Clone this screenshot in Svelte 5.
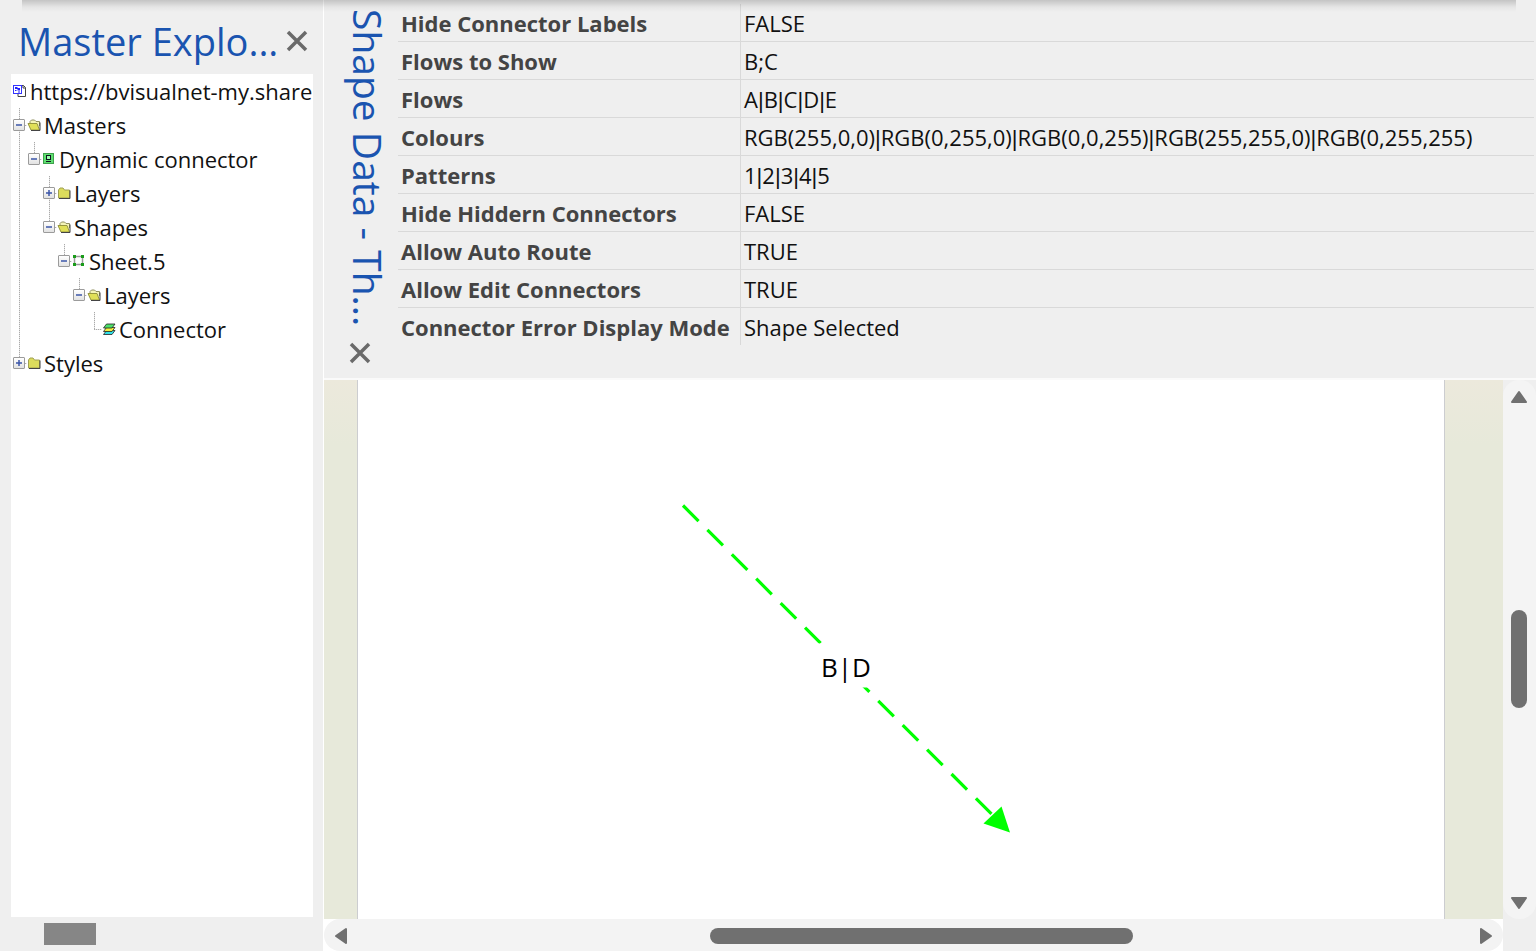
<script lang="ts">
  type Row = {
    label: string;
    icon: "open" | "closed" | "master" | "shape" | "layer";
    box?: "+" | "-";
    guides: string[];
  };

  // guides: one cell per level, the last one belongs to the row itself
  const rows: Row[] = [
    { label: "Masters", icon: "open", box: "-", guides: ["full"] },
    { label: "Dynamic connector", icon: "master", box: "-", guides: ["full", "half"] },
    { label: "Layers", icon: "closed", box: "+", guides: ["full", "", "full"] },
    { label: "Shapes", icon: "open", box: "-", guides: ["full", "", "half"] },
    { label: "Sheet.5", icon: "shape", box: "-", guides: ["full", "", "", "half"] },
    { label: "Layers", icon: "open", box: "-", guides: ["full", "", "", "", "half"] },
    { label: "Connector", icon: "layer", guides: ["full", "", "", "", "", "half"] },
    { label: "Styles", icon: "closed", box: "+", guides: ["half"] },
  ];

  const shapeData = [
    ["Hide Connector Labels", "FALSE"],
    ["Flows to Show", "B;C"],
    ["Flows", "A|B|C|D|E"],
    ["Colours", "RGB(255,0,0)|RGB(0,255,0)|RGB(0,0,255)|RGB(255,255,0)|RGB(0,255,255)"],
    ["Patterns", "1|2|3|4|5"],
    ["Hide Hiddern Connectors", "FALSE"],
    ["Allow Auto Route", "TRUE"],
    ["Allow Edit Connectors", "TRUE"],
    ["Connector Error Display Mode", "Shape Selected"],
  ];
</script>

<div class="app">
  <div class="top-shadow"></div>

  <aside class="explorer">
    <header class="explorer-head">
      <h1>Master Explo...</h1>
      <button class="close" aria-label="Close Master Explorer">
        <svg width="22" height="22" viewBox="0 0 22 22"><path d="M2 2L20 20M20 2L2 20" /></svg>
      </button>
    </header>
    <div class="tree">
      <div class="row root">
        <svg class="doc" width="14" height="14" viewBox="0 0 14 14">
          <path d="M5 1.500h5.500l2 2V12.500H5z" fill="#fff" stroke="#444" />
          <path d="M10 1.500v2.500h2.500" fill="none" stroke="#444" />
          <rect x=".5" y="1.500" width="8" height="8" fill="#fff" stroke="#33f" />
          <path d="M2 3h2.500v2H2zM4.500 4h2.500v2.500H4.500zM2 6h1.500v1H2zM5 7.500h2v1H5z" fill="#22f" />
        </svg>
        <span>https://bvisualnet-my.share</span>
      </div>
      {#each rows as row}
        <div class="row">
          {#each row.guides as guide, i}
            <span class="cell {guide}" class:own={i === row.guides.length - 1}>
              {#if row.box && i === row.guides.length - 1}
                <button class="box" aria-label="Toggle {row.label}">
                  <svg width="8" height="8" viewBox="0 0 8 8">
                    <path d={row.box === "+" ? "M1 4h6M4 1v6" : "M1 4h6"} stroke="#3b56a8" stroke-width="1.5" />
                  </svg>
                </button>
              {/if}
            </span>
          {/each}
          <svg class="icon" width="14" height="14" viewBox="0 0 14 14">
            {#if row.icon === "closed"}
              <path d="M1.500 4L3 2h3l1.500 2h5v8h-11z" fill="#dcdc5c" stroke="#a0a052" />
              <path d="M2 12.500h11V4.500" fill="none" stroke="#444" />
            {:else if row.icon === "open"}
              <path d="M3 8V3.500L4.500 2h3L9 3.500h3.500V8" fill="#f4f4b8" stroke="#909060" />
              <path d="M1 5.500h9l2.500 6.500H4z" fill="#e0e058" stroke="#96963f" />
              <path d="M4 12.500h9V4.500" fill="none" stroke="#444" />
            {:else if row.icon === "master"}
              <rect x="1.500" y="1.500" width="10" height="10" fill="#5ee070" stroke="#3fa04c" />
              <rect x="4.500" y="3.500" width="4" height="4" fill="#9fa" stroke="#112" />
              <path d="M4 9.500h5" stroke="#112" />
            {:else if row.icon === "shape"}
              <rect x="2.500" y="2.500" width="8" height="8" fill="#fff" stroke="#999" stroke-width="1.5" />
              <path d="M1 1h3v3H1zM9 1h3v3H9zM1 9h3v3H1zM9 9h3v3H9z" fill="#1a9c1a" />
            {:else}
              <path d="M4.500 8.500h8.500l-3 4H1.500z" fill="#2fe0e8" stroke="#222" stroke-width=".8" />
              <path d="M4.500 5.500h8.500l-3 4H1.500z" fill="#f2ee3c" stroke="#222" stroke-width=".8" />
              <path d="M4.500 2h8.500l-3 4H1.500z" fill="#4ee06a" stroke="#222" stroke-width=".8" />
            {/if}
          </svg>
          <span class="label">{row.label}</span>
        </div>
      {/each}
    </div>
    <div class="tree-scroll"><div class="tree-thumb"></div></div>
  </aside>

  <main>
    <section class="shape-data">
      <header class="data-head">
        <h2>Shape Data - Th...</h2>
        <button class="close" aria-label="Close Shape Data">
          <svg width="22" height="22" viewBox="0 0 22 22"><path d="M2 2L20 20M20 2L2 20" /></svg>
        </button>
      </header>
      <table>
        <tbody>
          {#each shapeData as [name, value]}
            <tr>
              <th scope="row">{name}</th>
              <td>{#each value.split("|") as part, i}{#if i > 0}<span class="sep">|</span>{/if}{part}{/each}</td>
            </tr>
          {/each}
        </tbody>
      </table>
    </section>

    <section class="drawing">
      <div class="page">
        <svg viewBox="0 0 1086 538">
          <path d="M325 125L636 436" stroke="#0f0" stroke-width="3.2" stroke-dasharray="22 12.520" />
          <path d="M652 452L625.500 443L643.500 426z" fill="#0f0" />
          <rect x="460" y="263" width="60" height="44" fill="#fff" />
          <text x="488" y="296" text-anchor="middle">B|D</text>
        </svg>
      </div>
      <div class="vbar">
        <button aria-label="Scroll up"><svg width="18" height="14" viewBox="0 0 18 14"><path d="M9 2L16 12H2z" /></svg></button>
        <div class="vtrack"><div class="vthumb"></div></div>
        <button aria-label="Scroll down"><svg width="18" height="14" viewBox="0 0 18 14"><path d="M9 12L2 2H16z" /></svg></button>
      </div>
      <div class="hwrap">
        <div class="hbar">
          <button aria-label="Scroll left"><svg width="14" height="18" viewBox="0 0 14 18"><path d="M2 9L12 2V16z" /></svg></button>
          <div class="htrack"><div class="hthumb"></div></div>
          <button aria-label="Scroll right"><svg width="14" height="18" viewBox="0 0 14 18"><path d="M12 9L2 16V2z" /></svg></button>
        </div>
      </div>
    </section>
  </main>
</div>

<style>
  :global(body) {
    background: #efefef;
  }
  .app {
    position: relative;
    display: grid;
    grid-template-columns: 323px minmax(0, 1fr);
    min-height: 100vh;
    background: #efefef;
    color: #111;
    font-family: "Open Sans", "Noto Sans", sans-serif;
    font-size: 22px;
  }
  .top-shadow {
    position: absolute;
    top: 0;
    left: 22px;
    right: 20px;
    height: 12px;
    background: linear-gradient(rgba(0, 0, 0, 0.18), rgba(0, 0, 0, 0.04) 60%, transparent);
  }
  button {
    display: flex;
    align-items: center;
    justify-content: center;
    border: 0;
    padding: 0;
    background: none;
    cursor: pointer;
  }
  h1,
  h2 {
    margin: 0;
    color: #1a54b0;
    font-size: 38px;
    font-weight: 400;
    line-height: 50px;
    white-space: nowrap;
  }
  .close path {
    stroke: #6a6a6a;
    stroke-width: 3.5;
    fill: none;
  }

  .explorer {
    display: flex;
    flex-direction: column;
    padding: 0 10px 0 11px;
  }
  .explorer-head {
    display: flex;
    align-items: center;
    justify-content: space-between;
    height: 50px;
    padding: 16px 5px 8px 7px;
  }
  .tree {
    flex: 1;
    background: #fff;
    padding-left: 1px;
    overflow: hidden;
  }
  .row {
    display: flex;
    align-items: center;
    height: 34px;
    white-space: nowrap;
  }
  .doc {
    flex: none;
    margin: 0 3px 0 1px;
  }
  .cell {
    display: flex;
    align-items: center;
    flex: none;
    width: 15px;
    height: 34px;
    padding-left: 1px;
    box-sizing: border-box;
    background-position: 7px 0;
    background-repeat: no-repeat;
  }
  .full,
  .half {
    background-image: repeating-linear-gradient(#aaa 0 1px, #e6e6e6 1px 2px);
    background-size: 1px 100%;
  }
  .half {
    background-size: 1px 50%;
  }
  .own::after {
    content: "";
    flex: 1;
    height: 1px;
    background: repeating-linear-gradient(90deg, #aaa 0 1px, #e6e6e6 1px 2px);
  }
  .own:not(:has(button)) {
    padding-left: 7px;
  }
  .box {
    width: 12px;
    height: 12px;
    border: 1px solid #9b9b9b;
    border-radius: 1px;
    background: linear-gradient(#fff, #e2e2e2);
  }
  .icon {
    flex: none;
    margin-right: 3px;
  }
  .tree-scroll {
    height: 34px;
    padding: 6px 0 0 33px;
    box-sizing: border-box;
  }
  .tree-thumb {
    width: 52px;
    height: 22px;
    background: #868686;
  }

  main {
    display: grid;
    grid-template-rows: auto minmax(0, 1fr);
    border-left: 1px solid #fff;
  }
  .shape-data {
    display: flex;
    height: 378px;
    border-bottom: 2px solid #fafafa;
  }
  .data-head {
    display: flex;
    flex-direction: column;
    justify-content: space-between;
    align-items: flex-end;
    width: 74px;
    padding: 9px 5px 14px 0;
    box-sizing: border-box;
  }
  .data-head .close {
    margin-right: 22px;
  }
  h2 {
    font-size: 39px;
    writing-mode: vertical-rl;
  }
  table {
    flex: 1;
    align-self: flex-start;
    margin: 4px 2px 0 0;
    border-collapse: collapse;
  }
  th,
  td {
    height: 35px;
    padding: 2px 3px 0;
    border-bottom: 1px solid #d9d9d9;
    text-align: left;
    line-height: 35px;
    white-space: nowrap;
  }
  th {
    width: 336px;
    border-right: 1px solid #d9d9d9;
    color: #444;
    font-weight: 700;
  }
  tr:last-child > * {
    border-bottom: 0;
  }
  .sep {
    font-family: "Liberation Sans", Arial, sans-serif;
    line-height: 1;
  }

  .drawing {
    display: grid;
    grid-template-columns: minmax(0, 1fr) 33px;
    grid-template-rows: minmax(0, 1fr) 32px;
  }
  .page {
    padding: 0 58px 0 33px;
    background: linear-gradient(#ece9dc, #e7e9da 12%);
  }
  .page svg {
    display: block;
    width: 100%;
    height: 100%;
    box-sizing: border-box;
    border: 1px solid #cccdd0;
    border-width: 0 1px;
    background: #fff;
  }
  .page text {
    font-size: 26px;
    fill: #000;
  }
  .vbar {
    display: flex;
    flex-direction: column;
    align-items: center;
    padding: 10px 1px 9px 0;
    border-radius: 16px;
    background: #f4f4f4;
  }
  .vbar path,
  .hbar path {
    fill: #707070;
    stroke: #707070;
    stroke-width: 2;
    stroke-linejoin: round;
  }
  .vtrack {
    flex: 1;
    width: 16px;
    display: flex;
    flex-direction: column;
    justify-content: center;
    padding-top: 18px;
  }
  .vthumb {
    height: 98px;
    border-radius: 8px;
    background: #707070;
  }
  .hwrap {
    background: #fff;
  }
  .hbar {
    display: flex;
    align-items: center;
    height: 32px;
    padding: 2px 10px 0;
    box-sizing: border-box;
    border-radius: 16px;
    background: #f3f3f3;
  }
  .htrack {
    flex: 1;
    display: flex;
    justify-content: center;
    padding-left: 16px;
  }
  .hthumb {
    width: 38%;
    height: 16px;
    border-radius: 8px;
    background: #707070;
  }
</style>
